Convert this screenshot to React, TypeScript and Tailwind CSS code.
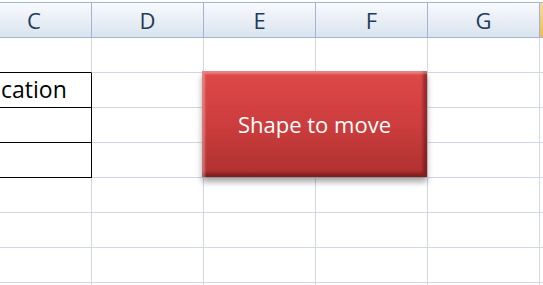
const COLUMNS = ["C", "D", "E", "F", "G"];
const ROWS = 8;

const FONT = "font-['Open_Sans',sans-serif]";

function Cell({ col, row }: { col: number; row: number }) {
  const boxed = col === 0 && row >= 1 && row <= 3;
  const topOfBox = col === 0 && row === 0;
  return (
    <div
      className={
        "h-[35px] shrink-0 border-b border-r " +
        (col === 0 ? "w-[92px] " : "w-[112px] ") +
        (boxed ? "border-black" : topOfBox ? "border-r-[#d0d7e5] border-b-black" : "border-[#d0d7e5]")
      }
    >
      {col === 0 && row === 1 && (
        <span className={`${FONT} block pl-[1px] text-[23px] leading-[33px] text-black whitespace-nowrap`}>cation</span>
      )}
    </div>
  );
}

export default function App() {
  return (
    <div className="relative h-[285px] w-[543px] overflow-hidden bg-white">
      <div className="pt-[2px]">
        <div className="flex h-[36px] border-y border-[#9eb6ce] bg-gradient-to-b from-[#f8fafd] to-[#dae3ee]">
          {COLUMNS.map((c, i) => (
            <div
              key={c}
              className={`${FONT} flex shrink-0 items-center border-r border-[#9eb6ce] text-[22px] text-[#1f3b57] ${
                i === 0 ? "w-[92px] justify-start pl-[27px]" : "w-[112px] justify-center"
              }`}
            >
              {c}
            </div>
          ))}
          <div className="w-[40px] shrink-0 bg-gradient-to-b from-[#f9d99f] to-[#f1b84f]" />
        </div>
      </div>
      <div>
        {Array.from({ length: ROWS }).map((_, r) => (
          <div key={r} className="flex">
            {COLUMNS.map((c, i) => (
              <Cell key={c} col={i} row={r} />
            ))}
            <div className="h-[35px] w-[40px] shrink-0 border-b border-[#d0d7e5]" />
          </div>
        ))}
      </div>

      {/* floating shape */}
      <div className="absolute left-[202px] top-[71px] flex h-[106px] w-[225px] items-center justify-center bg-gradient-to-b from-[#de4949] via-[#cd3d3d] to-[#ad3030] shadow-[inset_3px_3px_2px_rgba(255,255,255,0.3),inset_-4px_-4px_3px_rgba(70,0,0,0.4),0_5px_6px_rgba(0,0,0,0.35)]">
        <span className={`${FONT} text-[22px] text-white`}>Shape to move</span>
      </div>
    </div>
  );
}
